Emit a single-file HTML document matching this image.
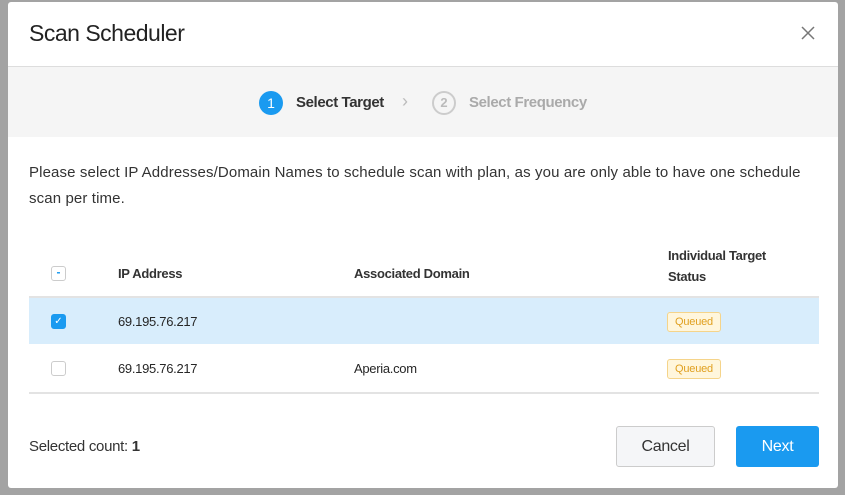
<!DOCTYPE html>
<html><head><style>
*{box-sizing:border-box;margin:0;padding:0}
body{width:845px;height:495px;background:#a3a3a3;font-family:"Liberation Sans",sans-serif;color:#262626;position:relative;overflow:hidden}
.m{position:absolute;left:8px;top:2px;width:830px;height:486px;background:#fff;border-radius:3px}
.a{position:absolute;white-space:nowrap}
.t{font-size:13px;letter-spacing:-0.3px}
.h{font-size:13px;font-weight:bold;letter-spacing:-0.3px;color:#333}
.cb{position:absolute;width:15px;height:15px;border:1px solid #ccc;border-radius:3px;background:#fff}
.q{position:absolute;left:659px;width:54px;height:20px;border:1px solid #f5d48a;background:#fff6dc;border-radius:3px;color:#e0a020;font-size:11px;text-align:center;line-height:18px;letter-spacing:-0.2px}
</style></head><body>
<div class="m">
<div class="a" style="left:21px;top:18px;font-size:23px;letter-spacing:-0.5px;color:#222">Scan Scheduler</div>
<svg class="a" style="left:793px;top:24px" width="14" height="14" viewBox="0 0 14 14"><path d="M1 1L13 13M13 1L1 13" stroke="#777" stroke-width="1.5"/></svg>
<div class="a" style="left:0;top:64px;width:830px;height:71px;background:#f5f5f5;border-top:1px solid #ddd"></div>
<div class="a" style="left:251px;top:89px;width:24px;height:24px;border-radius:50%;background:#1a9af0;color:#fff;font-size:14px;text-align:center;line-height:24px">1</div>
<div class="a" style="left:288px;top:92px;font-size:15px;font-weight:bold;letter-spacing:-0.4px;color:#333">Select Target</div>
<div class="a" style="left:394px;top:89px;font-size:18px;color:#bbb">&#x203A;</div>
<div class="a" style="left:424px;top:89px;width:24px;height:24px;border-radius:50%;border:2px solid #ccc;color:#bbb;font-size:13px;text-align:center;line-height:20px;font-weight:bold">2</div>
<div class="a" style="left:461px;top:92px;font-size:15px;font-weight:bold;letter-spacing:-0.4px;color:#aaa">Select Frequency</div>
<div class="a" style="left:21px;top:158px;font-size:15px;letter-spacing:0.12px;line-height:26px;color:#333;white-space:normal;width:790px">Please select IP Addresses/Domain Names to schedule scan with plan, as you are only able to have one schedule scan per time.</div>
<div class="cb" style="left:43px;top:264px;color:#1a9af0;font-size:12px;line-height:11px;text-align:center;font-weight:bold">-</div>
<div class="a h" style="left:110px;top:264px">IP Address</div>
<div class="a h" style="left:346px;top:264px">Associated Domain</div>
<div class="a h" style="left:660px;top:243px;line-height:21px">Individual Target<br>Status</div>
<div class="a" style="left:21px;top:294px;width:790px;height:48px;background:#d8edfc;border-top:2px solid #e3e3e3"></div>
<div class="cb" style="left:43px;top:312px;background:#1a9af0;border-color:#1a9af0;color:#fff;font-size:10px;text-align:center;line-height:13px">✓</div>
<div class="a t" style="left:110px;top:312px">69.195.76.217</div>
<div class="q" style="top:310px">Queued</div>
<div class="a" style="left:21px;top:390px;width:790px;height:2px;background:#e3e3e3"></div>
<div class="cb" style="left:43px;top:359px"></div>
<div class="a t" style="left:110px;top:359px">69.195.76.217</div>
<div class="a t" style="left:346px;top:359px">Aperia.com</div>
<div class="q" style="top:357px">Queued</div>
<div class="a" style="left:21px;top:436px;font-size:15px;letter-spacing:-0.3px;color:#333">Selected count: <b>1</b></div>
<div class="a" style="left:608px;top:424px;width:99px;height:41px;border:1px solid #ccc;border-radius:3px;background:#f5f6f8;font-size:16px;text-align:center;line-height:39px;color:#333;letter-spacing:-0.3px">Cancel</div>
<div class="a" style="left:728px;top:424px;width:83px;height:41px;border-radius:3px;background:#1a9af0;font-size:16px;text-align:center;line-height:41px;color:#fff;letter-spacing:-0.3px">Next</div>
</div>
</body></html>
